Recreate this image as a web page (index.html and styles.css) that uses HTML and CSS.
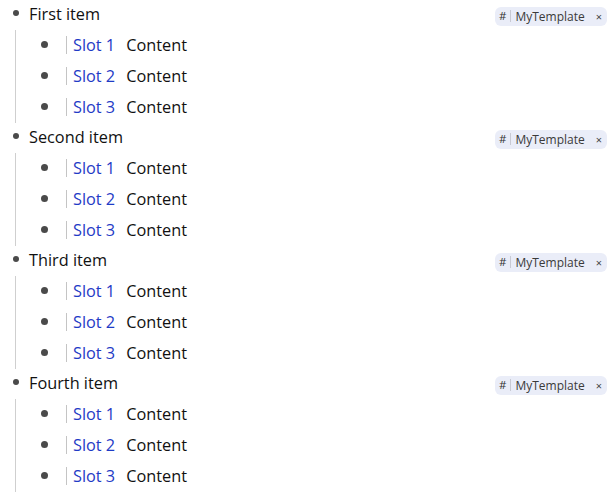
FILE: index.html
```html
<!DOCTYPE html>
<html>
<head>
<meta charset="utf-8">
<link rel="stylesheet" href="styles.css">
</head>
<body>
<div class="outline">
  <div class="item">
    <div class="row top"><span class="dot"></span><span class="title">First item</span><span class="tag"><span class="hash">#</span><span class="tname">MyTemplate</span><span class="x">×</span></span></div>
    <div class="children">
      <div class="row child"><span class="cdot"></span><span class="slot">Slot 1</span><span class="content">Content</span></div>
      <div class="row child"><span class="cdot"></span><span class="slot">Slot 2</span><span class="content">Content</span></div>
      <div class="row child"><span class="cdot"></span><span class="slot">Slot 3</span><span class="content">Content</span></div>
    </div>
  </div>
  <div class="item">
    <div class="row top"><span class="dot"></span><span class="title">Second item</span><span class="tag"><span class="hash">#</span><span class="tname">MyTemplate</span><span class="x">×</span></span></div>
    <div class="children">
      <div class="row child"><span class="cdot"></span><span class="slot">Slot 1</span><span class="content">Content</span></div>
      <div class="row child"><span class="cdot"></span><span class="slot">Slot 2</span><span class="content">Content</span></div>
      <div class="row child"><span class="cdot"></span><span class="slot">Slot 3</span><span class="content">Content</span></div>
    </div>
  </div>
  <div class="item">
    <div class="row top"><span class="dot"></span><span class="title">Third item</span><span class="tag"><span class="hash">#</span><span class="tname">MyTemplate</span><span class="x">×</span></span></div>
    <div class="children">
      <div class="row child"><span class="cdot"></span><span class="slot">Slot 1</span><span class="content">Content</span></div>
      <div class="row child"><span class="cdot"></span><span class="slot">Slot 2</span><span class="content">Content</span></div>
      <div class="row child"><span class="cdot"></span><span class="slot">Slot 3</span><span class="content">Content</span></div>
    </div>
  </div>
  <div class="item">
    <div class="row top"><span class="dot"></span><span class="title">Fourth item</span><span class="tag"><span class="hash">#</span><span class="tname">MyTemplate</span><span class="x">×</span></span></div>
    <div class="children">
      <div class="row child"><span class="cdot"></span><span class="slot">Slot 1</span><span class="content">Content</span></div>
      <div class="row child"><span class="cdot"></span><span class="slot">Slot 2</span><span class="content">Content</span></div>
      <div class="row child"><span class="cdot"></span><span class="slot">Slot 3</span><span class="content">Content</span></div>
    </div>
  </div>
</div>
</body>
</html>
```
FILE: styles.css
```css
html, body {
  margin: 0;
  padding: 0;
  background: #ffffff;
}
body {
  font-family: "Open Sans", "Noto Sans", sans-serif;
  color: #111111;
  font-size: 16.3px;
}
.outline {
  padding: 0 7px 0 13px;
}
.row {
  display: flex;
  align-items: center;
}
.top {
  height: 30px;
}
.dot {
  width: 6px;
  height: 6px;
  border-radius: 50%;
  background: #4a4a4a;
  margin-right: 10px;
  margin-bottom: 4px;
}
.title {
  flex: 1;
  margin-bottom: 3px;
}
.tag {
  display: flex;
  align-items: center;
  height: 19px;
  background: #eaedf8;
  border-radius: 6px;
  padding: 0 5px 0 4px;
  font-size: 12px;
  color: #333;
  margin-top: 2px;
}
.hash {
  font-size: 11.5px;
  padding-right: 4px;
  border-right: 1px solid #c8cad4;
  line-height: 12px;
  margin-right: 4px;
}
.tname {
  color: #3a3a3a;
}
.x {
  margin-left: 11px;
  font-size: 11px;
  color: #444;
}
.children {
  margin-left: 2px;
  border-left: 1px solid #cfcfcf;
  padding-left: 25px;
}
.child {
  height: 31px;
}
.cdot {
  width: 7px;
  height: 7px;
  border-radius: 50%;
  background: #4a4a4a;
  margin-right: 18px;
  margin-bottom: 2px;
}
.slot {
  color: #1f3bc6;
  border-left: 1px solid #c4c4c4;
  padding-left: 6px;
  margin-right: 11px;
  line-height: 18px;
  margin-bottom: 2px;
}
.content {
  color: #111111;
  margin-bottom: 2px;
}
```
